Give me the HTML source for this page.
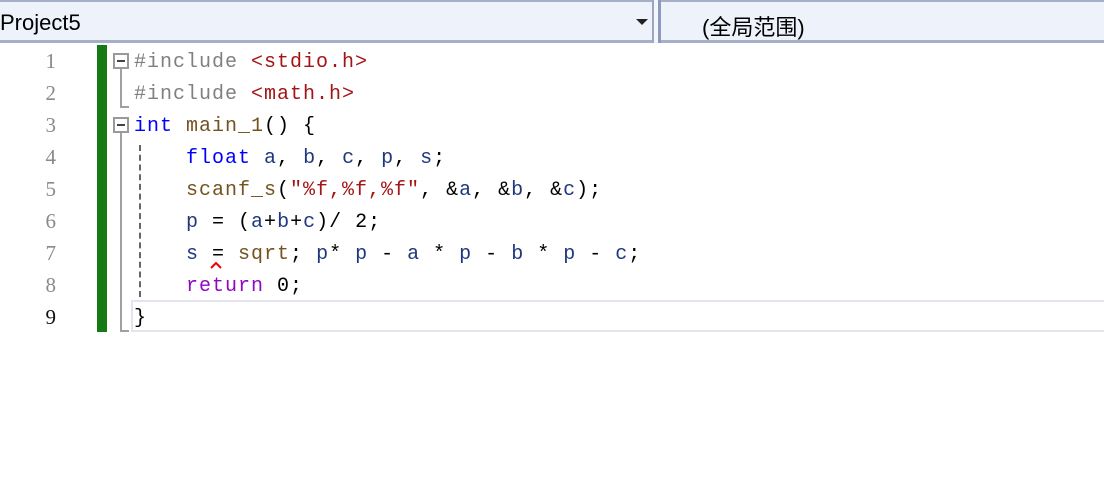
<!DOCTYPE html><html><head><meta charset="utf-8"><style>
body{margin:0;width:1104px;height:485px;background:#fff;overflow:hidden;position:relative;font-family:"Liberation Mono",monospace}
.bar{position:absolute;left:0;top:0;width:1104px;height:43px;background:#eef2fb;border-top:2px solid #a5b0c8;border-bottom:3px solid #a5b0c8;box-sizing:border-box}
.sep{position:absolute;left:652px;top:0;width:9px;height:43px;background:#f4f6fb;border-left:2px solid #9aa6c2;border-right:3px solid #8c9bbd;box-sizing:border-box}
.t{position:absolute;font-family:"Liberation Sans","Noto Sans CJK SC",sans-serif;font-size:22px;color:#000;top:9px}
.ln{position:absolute;left:0;width:56px;text-align:right;color:#8a8a8a;font-size:21px;font-family:"Liberation Serif",serif}
.c{position:absolute;font-size:20px;letter-spacing:1px;white-space:pre;color:#000}
.k{color:#0000ff}.p{color:#808080}.s{color:#a31515}.f{color:#74531f}.v{color:#1f377f}.r{color:#8f08c4}
.fold{position:absolute;left:113px;width:16px;height:16px;border:2px solid #9a9a9a;box-sizing:border-box}
.fold:after{content:"";position:absolute;left:2px;top:5px;width:8px;height:2px;background:#444}
</style></head><body>
<div class="bar"></div>
<div class="sep"></div>
<div class="t" style="left:0;top:10px">Project5</div>
<div style="position:absolute;left:636px;top:19px;border-left:6px solid transparent;border-right:6px solid transparent;border-top:6px solid #222"></div>
<div class="t" style="left:702px;top:10px">(全局范围)</div>
<div style="position:absolute;left:97px;top:45px;width:10px;height:287px;background:#157a16"></div>
<div style="position:absolute;left:131px;top:300px;width:973px;height:32px;border:2px solid #e4e4ee;border-right:none;box-sizing:border-box"></div>
<div class="fold" style="top:53px"></div>
<div style="position:absolute;left:120px;top:69px;width:2px;height:39px;background:#a0a0a0"></div>
<div style="position:absolute;left:120px;top:106px;width:9px;height:2px;background:#a0a0a0"></div>
<div class="fold" style="top:117px"></div>
<div style="position:absolute;left:120px;top:133px;width:2px;height:199px;background:#a0a0a0"></div>
<div style="position:absolute;left:120px;top:330px;width:9px;height:2px;background:#a0a0a0"></div>
<div style="position:absolute;left:139px;top:145px;width:0;height:152px;border-left:2px dashed #666"></div>
<div class="ln" style="top:49px">1</div><div class="ln" style="top:81px">2</div><div class="ln" style="top:113px">3</div><div class="ln" style="top:145px">4</div><div class="ln" style="top:177px">5</div><div class="ln" style="top:209px">6</div><div class="ln" style="top:241px">7</div><div class="ln" style="top:273px">8</div><div class="ln" style="top:305px;color:#111">9</div>
<div class="c" style="left:134px;top:51px"><span class="p">#include</span> <span class="s">&lt;stdio.h&gt;</span></div>
<div class="c" style="left:134px;top:83px"><span class="p">#include</span> <span class="s">&lt;math.h&gt;</span></div>
<div class="c" style="left:134px;top:115px"><span class="k">int</span> <span class="f">main_1</span>() {</div>
<div class="c" style="left:186px;top:147px"><span class="k">float</span> <span class="v">a</span>, <span class="v">b</span>, <span class="v">c</span>, <span class="v">p</span>, <span class="v">s</span>;</div>
<div class="c" style="left:186px;top:179px"><span class="f">scanf_s</span>(<span class="s">"%f,%f,%f"</span>, &amp;<span class="v">a</span>, &amp;<span class="v">b</span>, &amp;<span class="v">c</span>);</div>
<div class="c" style="left:186px;top:211px"><span class="v">p</span> = (<span class="v">a</span>+<span class="v">b</span>+<span class="v">c</span>)/ 2;</div>
<div class="c" style="left:186px;top:243px"><span class="v">s</span> = <span class="f">sqrt</span>; <span class="v">p</span>* <span class="v">p</span> - <span class="v">a</span> * <span class="v">p</span> - <span class="v">b</span> * <span class="v">p</span> - <span class="v">c</span>;</div>
<svg style="position:absolute;left:210px;top:261px" width="12" height="8"><path d="M1 7 L6 2 L11 7" stroke="#e00" stroke-width="2" fill="none"/></svg>
<div class="c" style="left:186px;top:275px"><span class="r">return</span> 0;</div>
<div class="c" style="left:134px;top:307px">}</div>
</body></html>
